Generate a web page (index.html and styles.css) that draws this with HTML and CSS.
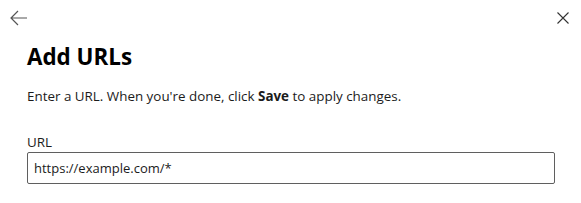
FILE: index.html
```html
<!DOCTYPE html>
<html>
<head>
<meta charset="utf-8">
<link rel="stylesheet" href="styles.css">
</head>
<body>
<div class="panel">
  <div class="topbar">
    <button class="icon-btn back" aria-label="Back">
      <svg width="18" height="16" viewBox="0 0 18 16"><path d="M8 1 L1 8 L8 15 M1 8 H17" fill="none" stroke="#555" stroke-width="1.2"/></svg>
    </button>
    <button class="icon-btn close" aria-label="Close">
      <svg width="12" height="12" viewBox="0 0 12 12"><path d="M0.5 0.5 L11.5 11.5 M11.5 0.5 L0.5 11.5" fill="none" stroke="#333" stroke-width="1.1"/></svg>
    </button>
  </div>
  <div class="content">
    <h1 class="title">Add URLs</h1>
    <p class="desc">Enter a URL. When you're done, click <b>Save</b> to apply changes.</p>
    <label class="field">
      <span class="label">URL</span>
      <input class="input" type="text" value="https://example.com/*">
    </label>
  </div>
</div>
</body>
</html>
```
FILE: styles.css
```css
html, body {
  margin: 0;
  padding: 0;
  background: #fff;
}
body {
  font-family: "Segoe UI", "Open Sans", "Noto Sans", sans-serif;
  color: #1b1b1b;
}
.panel {
  width: 581px;
  height: 203px;
  box-sizing: border-box;
}
.topbar {
  display: flex;
  justify-content: space-between;
  align-items: center;
  height: 36px;
  padding: 0 12px 0 10px;
}
.icon-btn {
  border: 0;
  background: none;
  padding: 0;
  display: flex;
  align-items: center;
  justify-content: center;
}
.content {
  padding: 0 26px 0 27px;
}
.title {
  margin: 7px 0 0;
  font-size: 22.4px;
  font-weight: 700;
  line-height: 28px;
  color: #000;
}
.desc {
  margin: 15px 0 0;
  font-size: 13.4px;
  line-height: 20px;
  color: #1b1b1b;
}
.desc b {
  font-weight: 700;
}
.field {
  display: flex;
  flex-direction: column;
  margin-top: 27px;
}
.label {
  font-size: 13.4px;
  line-height: 18px;
  color: #1b1b1b;
}
.input {
  margin-top: 1px;
  height: 32px;
  box-sizing: border-box;
  border: 1px solid #5f5f5f;
  border-radius: 2px;
  padding: 0 6px;
  font-family: inherit;
  font-size: 13px;
  color: #1b1b1b;
  outline: none;
}
```
